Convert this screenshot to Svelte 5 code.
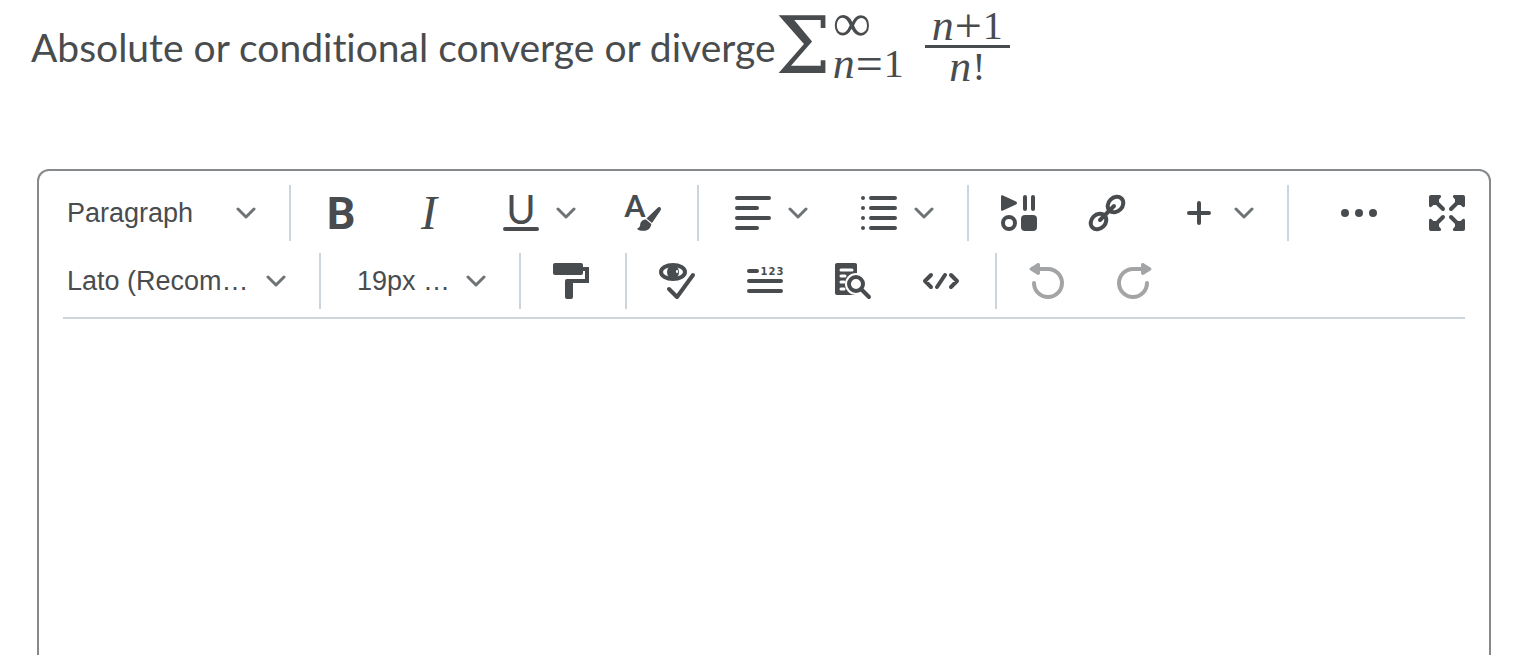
<script lang="ts">
  let style = $state('Paragraph')
  let font = $state('Lato')
  let size = $state('19px')
  let content = $state('')
</script>

{#snippet chevron()}
  <svg class="chevron" viewBox="0 0 20 12" aria-hidden="true">
    <path d="M2 2l8 8 8-8" />
  </svg>
{/snippet}

{#snippet tool(label: string, icon, split = false, disabled = false)}
  <button type="button" class:split aria-label={label} title={label} {disabled}>
    <svg class="icon" viewBox="0 0 36 36" aria-hidden="true">{@render icon()}</svg>
    {#if split}{@render chevron()}{/if}
  </button>
{/snippet}

{#snippet bold()}<text class="bold" x="18" y="34">B</text>{/snippet}
{#snippet italic()}<text class="italic" x="18" y="34">I</text>{/snippet}
{#snippet underline()}
  <text class="underline" x="18" y="29">U</text>
  <path d="M2 34h32" />
{/snippet}
{#snippet textStyle()}
  <text class="letter" x="10" y="22">A</text>
  <path class="fill" d="M35.4 12.6c.9.8.7 2 .1 3L27 28l-5.5-4.5L32.4 13c1-1 2-1.200 3-.4z" />
  <path class="fill" d="M21 24.500c-3.500 0-5.500 2.200-5.800 5-.2 2-1 3.500-3.200 4 .5 1.800 4 2.500 7 2.300 4-.1 6.800-2.500 7.300-6.800z" />
{/snippet}
{#snippet align()}<path d="M2 3h32M2 13h20M2 23h32M2 33h20" />{/snippet}
{#snippet list()}
  <path d="M2 3h0M2 13h0M2 23h0M2 33h0M10 3h24M10 13h24M10 23h24M10 33h24" />
{/snippet}
{#snippet insertStuff()}
  <path class="fill" d="M0 1.500C0 .2 1 0 2 .4l13 6.200c1.400.7 1.400 2.100 0 2.800L2 15.600c-1 .4-2 .2-2-1.100z" />
  <path d="M24 2v12M32 2v12" />
  <circle cx="8" cy="28" r="6" />
  <rect class="fill" x="20" y="20" width="16" height="16" rx="4" />
{/snippet}
{#snippet link()}
  <ellipse cx="26.500" cy="9.500" rx="8.500" ry="7" transform="rotate(-45 26.500 9.500)" />
  <ellipse cx="9.500" cy="26.500" rx="8.500" ry="7" transform="rotate(-45 9.500 26.500)" />
  <path d="M11 25L25 11" />
{/snippet}
{#snippet plus()}<path d="M8 18h20M18 8v20" />{/snippet}
{#snippet more()}
  <circle class="fill" cx="4" cy="18" r="4" />
  <circle class="fill" cx="18" cy="18" r="4" />
  <circle class="fill" cx="32" cy="18" r="4" />
{/snippet}
{#snippet fullscreen()}
  {#each [0, 90, 180, 270] as angle}
    <g transform="rotate({angle} 18 18)">
      <path class="fill" d="M2 0h8.500c1.800 0 2 1.600 1.200 2.500L10 4.500v3L7.500 10h-3l-2 1.700C1.600 12.500 0 12.300 0 10.500V2C0 .8.800 0 2 0z" />
      <path d="M5 5l9 9" />
    </g>
  {/each}
{/snippet}
{#snippet painter()}
  <rect class="fill" width="30" height="12" rx="2" />
  <path class="square" d="M29 6h5v12H16" />
  <rect class="fill" x="12" y="16" width="8" height="20" rx="2" />
{/snippet}
{#snippet accessibility()}
  <ellipse cx="14" cy="9" rx="12" ry="7" />
  <ellipse class="fill" cx="14" cy="9" rx="6" ry="7" />
  <path class="cut" d="M18 8v1" />
  <path d="M10 26l8 8 16-22" />
{/snippet}
{#snippet wordCount()}
  <path d="M2 8h8M2 18h32M2 28h32" />
  <text class="digits" y="12"><tspan x="17">1</tspan><tspan x="25">2</tspan><tspan x="33">3</tspan></text>
{/snippet}
{#snippet find()}
  <path class="fill" d="M2 0h18c1.200 0 2 .8 2 2v30H2c-1.200 0-2-.8-2-2V2C0 .8.800 0 2 0z" />
  <path class="cut wide" d="M6 7h11M6 13h4M6 19h3M6 26h3" />
  <circle class="halo" cx="21" cy="21" r="11" />
  <circle cx="21" cy="21" r="7" />
  <path d="M26 26l8 8" />
{/snippet}
{#snippet code()}
  <path d="M8 12l-6 6 6 6M22 12l-8 12M28 12l6 6-6 6" />
{/snippet}
{#snippet undo()}
  <path d="M9 6h10a14 14 0 1 1-14 14" />
  <path class="fill" d="M1.200 4.800L8 .4C9.200-.4 11 .2 11 2v8c0 1.800-1.800 2.400-3 1.600L1.200 7.200c-.8-.6-.8-1.800 0-2.400z" />
{/snippet}
{#snippet redo()}<g transform="translate(35) scale(-1 1)">{@render undo()}</g>{/snippet}

<main>
  <h1>
    <span>Absolute or conditional converge or diverge</span>
    <span class="sum">
      <span class="sigma">Σ</span>
      <span class="limits">
        <span class="infinity">∞</span>
        <span class="term"><i>n</i><b>=</b><span>1</span></span>
      </span>
    </span>
    <span class="fraction">
      <span class="term"><i>n</i><b>+</b><span>1</span></span>
      <span class="term"><i>n</i><span>!</span></span>
    </span>
  </h1>

  <section class="editor" aria-label="Answer">
    <div class="toolbar" role="toolbar" aria-label="Formatting">
      <div class="row">
        <label class="paragraph">
          <select bind:value={style} aria-label="Format">
            <option>Paragraph</option>
            <option>Heading 1</option>
            <option>Heading 2</option>
          </select>
          {@render chevron()}
        </label>
        <div class="group">
          {@render tool('Bold', bold)}
          {@render tool('Italic', italic)}
          {@render tool('Underline', underline, true)}
          {@render tool('Text style', textStyle)}
        </div>
        <div class="group">
          {@render tool('Alignment', align, true)}
          {@render tool('List', list, true)}
        </div>
        <div class="group">
          {@render tool('Insert stuff', insertStuff)}
          {@render tool('Insert link', link)}
          {@render tool('Insert other', plus, true)}
        </div>
        <div class="group last">
          {@render tool('More actions', more)}
          {@render tool('Fullscreen', fullscreen)}
        </div>
      </div>
      <div class="row">
        <label class="font">
          <select bind:value={font} aria-label="Font">
            <option value="Lato">Lato (Recom…</option>
            <option>Arial</option>
          </select>
          {@render chevron()}
        </label>
        <div class="group">
          <label class="size">
            <select bind:value={size} aria-label="Font size">
              <option value="19px">19px …</option>
              <option>24px</option>
            </select>
            {@render chevron()}
          </label>
        </div>
        <div class="group">{@render tool('Format painter', painter)}</div>
        <div class="group">
          {@render tool('Accessibility check', accessibility)}
          {@render tool('Word count', wordCount)}
          {@render tool('Preview', find)}
          {@render tool('Source code', code)}
        </div>
        <div class="group">
          {@render tool('Undo', undo, false, true)}
          {@render tool('Redo', redo, false, true)}
        </div>
      </div>
    </div>
    <textarea bind:value={content} aria-label="Answer text"></textarea>
  </section>
</main>

<style>
  :global(body) {
    background: #fff;
    color: #494c4e;
    font-family: Lato, sans-serif;
  }

  main {
    box-sizing: border-box;
    display: flex;
    flex-direction: column;
    height: 100vh;
    overflow: hidden;
    padding: 0 44px 0 31px;
  }

  h1 {
    display: flex;
    flex: none;
    align-items: center;
    height: 93px;
    margin: 0 0 76px;
    font-size: 39px;
    font-weight: 400;
    font-variant-ligatures: none;
    line-height: 48px;
    white-space: nowrap;
  }

  .sum,
  .fraction {
    display: flex;
    font-family: "Liberation Serif", serif;
    font-size: 40px;
    line-height: 38px;
  }

  .sum {
    align-items: center;
  }

  .sigma {
    font-family: "DejaVu Serif", serif;
    font-size: 78px;
    line-height: 93px;
  }

  .infinity {
    font-size: 54px;
  }

  .limits {
    display: flex;
    flex-direction: column;
    gap: 3px;
    margin-left: 2px;
    padding-bottom: 6px;
  }

  .term {
    display: flex;
    gap: 1px;
  }

  .term i {
    font-size: 44px;
  }

  .term b {
    font-size: 48px;
    font-weight: 400;
  }

  .fraction {
    flex-direction: column;
    align-items: center;
    margin-left: 21px;
  }

  .fraction .term:first-child {
    padding: 0 7px;
    border-bottom: 3px solid;
  }

  .editor {
    display: flex;
    flex: none;
    flex-direction: column;
    margin-left: 6px;
    padding: 0 24px 24px;
    border: 2px solid #868a8d;
    border-radius: 12px;
  }

  .toolbar {
    padding: 14px 0 8px;
    border-bottom: 2px solid #cdd5dc;
  }

  .row {
    display: flex;
    height: 56px;
  }

  .row + .row {
    margin-top: 12px;
  }

  .group {
    display: flex;
    margin-left: 10px;
    padding-left: 6px;
    border-left: 2px solid #cdd5dc;
  }

  .group.last {
    flex: 1;
    justify-content: flex-end;
  }

  .group.last button:last-child {
    width: 62px;
    padding-right: 0;
  }

  button {
    box-sizing: border-box;
    display: flex;
    align-items: center;
    width: 88px;
    padding: 0 26px;
    border: 0;
    background: none;
    color: inherit;

    &.split {
      gap: 17px;
      width: 126px;
      padding: 0 23px 0 30px;
    }

    &:disabled {
      opacity: .5;
    }
  }

  label {
    display: grid;
    align-items: center;

    & > :global(*) {
      grid-area: 1 / 1;
    }

    .chevron {
      justify-self: end;
      margin-right: 23px;
      pointer-events: none;
    }
  }

  .paragraph {
    width: 216px;
  }

  .font {
    width: 246px;
  }

  .size {
    width: 182px;

    select {
      padding-left: 30px;
    }
  }

  select {
    appearance: none;
    width: 100%;
    height: 100%;
    padding: 0 0 0 4px;
    border: 0;
    background: none;
    color: inherit;
    font: 27px "Liberation Sans", Arial, sans-serif;
  }

  .icon {
    flex: none;
    width: 36px;
    height: 36px;
    overflow: visible;
    fill: none;
    stroke: currentColor;
    stroke-width: 4;
    stroke-linecap: round;
    stroke-linejoin: round;
  }

  .chevron {
    flex: none;
    width: 20px;
    height: 12px;
    fill: none;
    stroke: #6e7376;
    stroke-width: 3;
    stroke-linecap: round;
    stroke-linejoin: round;
  }

  .fill,
  text {
    fill: currentColor;
    stroke: none;
  }

  .square {
    stroke-linejoin: miter;
  }

  .cut {
    stroke: #fff;
    stroke-width: 2;
  }

  .wide {
    stroke-width: 3;
  }

  .halo {
    fill: #fff;
    stroke: none;
  }

  text {
    text-anchor: middle;
  }

  .bold {
    font: bold 45px Roboto, sans-serif;
  }

  .italic {
    font: italic 48px "Liberation Serif", serif;
  }

  .underline {
    font: 40px Lato, sans-serif;
  }

  .letter {
    font: bold 30px Lato, sans-serif;
  }

  .digits {
    font: bold 10px "DejaVu Sans", sans-serif;
  }

  textarea {
    height: 400px;
    padding: 16px 0;
    border: 0;
    outline: 0;
    resize: none;
    color: inherit;
    font: 38px Lato, sans-serif;
  }
</style>
